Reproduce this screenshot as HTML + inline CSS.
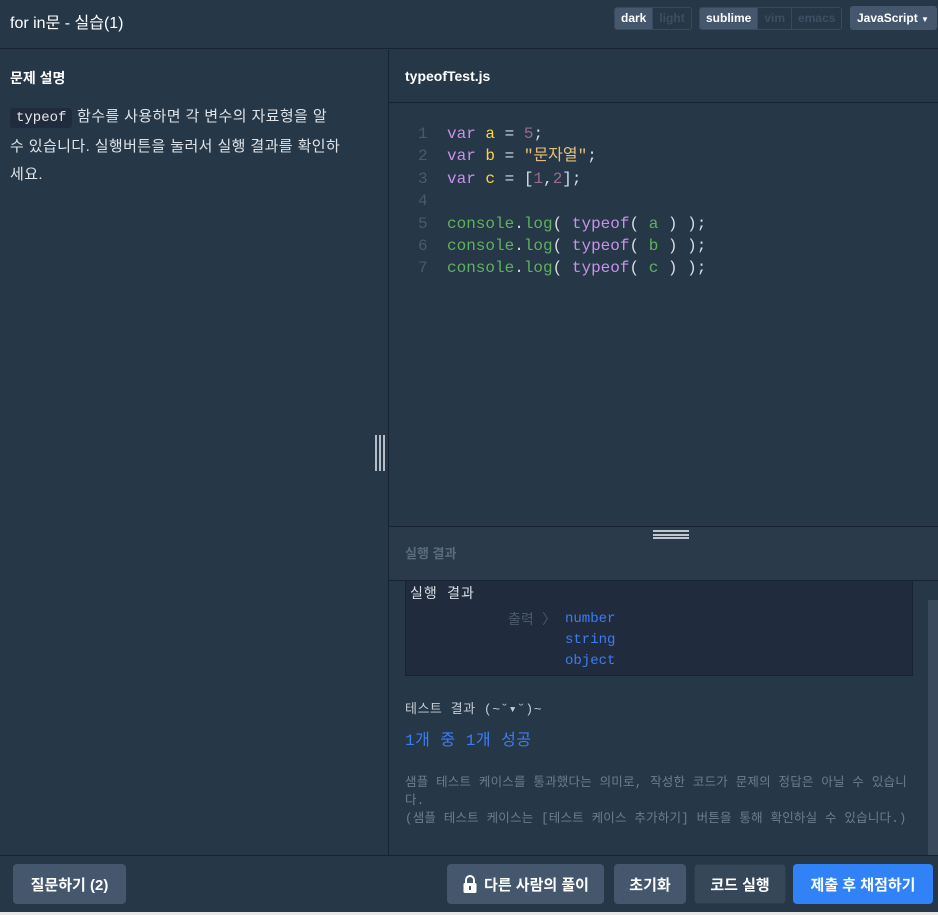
<!DOCTYPE html>
<html><head><meta charset="utf-8"><style>
*{box-sizing:border-box;margin:0;padding:0}
body{width:938px;height:915px;background:#263747;font-family:"Liberation Sans","Noto Sans CJK KR",sans-serif;color:#fff;position:relative;overflow:hidden}
.abs{position:absolute}
.mono{font-family:"Liberation Mono","Noto Sans CJK KR",monospace}
.top{left:0;top:0;width:938px;height:49px;border-bottom:1px solid #172334;background:#263747}
.grp{top:7px;height:23px;border:1px solid #3a4a5c;border-radius:3px;display:flex;font-size:12px;font-weight:bold;overflow:hidden}
.grp span{padding:0 6px;line-height:21px;color:#3d4f63;background:#263747;border-left:1px solid #3a4a5c}
.grp span.on{background:#44576c;color:#fff;border-left:none}
.btn{top:864px;height:40px;border-radius:4px;font-size:15px;font-weight:bold;display:flex;align-items:center;justify-content:center;background:#44576c;color:#fff}
.code div{height:22.4px;line-height:22.4px;white-space:pre;overflow:visible}
.ln{color:#4a5a6b;display:inline-block;width:29px;text-align:left}
.k{color:#c792ea}.v{color:#ffd43b}.n{color:#9b6b8f}.s{color:#e5c07b}.g{color:#5fb15f}.w{color:#d7dde4}
</style></head><body>
<div class="abs top"></div>
<div class="abs" style="left:10px;top:9px;font-size:16px">for in문 - 실습(1)</div>
<div class="abs grp" style="left:614px"><span class="on">dark</span><span>light</span></div>
<div class="abs grp" style="left:699px"><span class="on">sublime</span><span>vim</span><span>emacs</span></div>
<div class="abs" style="left:850px;top:6px;width:87px;height:24px;background:#44576c;border-radius:3px;font-size:12px;font-weight:bold;line-height:24px;padding-left:7px">JavaScript <span style="font-size:8px">▼</span></div>

<div class="abs" style="left:388px;top:50px;width:1px;height:805px;background:#172334"></div>
<div class="abs" style="left:10px;top:68px;font-size:14px;font-weight:bold">문제 설명</div>
<div class="abs" style="left:10px;top:103px;width:375px;font-size:15px;line-height:28.5px;color:#dfe4ea;letter-spacing:0.4px;white-space:nowrap"><span class="mono" style="background:#202b3d;border-radius:3px;padding:2px 6px;font-size:14px;color:#e6e6e6;letter-spacing:0">typeof</span> 함수를 사용하면 각 변수의 자료형을 알<br>수 있습니다. 실행버튼을 눌러서 실행 결과를 확인하<br>세요.</div>
<div class="abs" style="left:375px;top:435px;width:10px;height:36px;border-left:2px solid #b4bcc6;border-right:2px solid #b4bcc6"><div style="margin:0 auto;width:2px;height:36px;background:#b4bcc6"></div></div>

<div class="abs" style="left:389px;top:50px;width:549px;height:53px;border-bottom:1px solid #172334"></div>
<div class="abs" style="left:405px;top:68px;font-size:14px;font-weight:bold">typeofTest.js</div>
<div class="abs code mono" style="left:418px;top:123px;font-size:16px">
<div><span class="ln">1</span><span class="k">var</span> <span class="v">a</span> <span class="w">=</span> <span class="n">5</span><span class="w">;</span></div>
<div><span class="ln">2</span><span class="k">var</span> <span class="v">b</span> <span class="w">=</span> <span class="s">"문자열"</span><span class="w">;</span></div>
<div><span class="ln">3</span><span class="k">var</span> <span class="v">c</span> <span class="w">=</span> <span class="w">[</span><span class="n">1</span><span class="w">,</span><span class="n">2</span><span class="w">];</span></div>
<div><span class="ln">4</span></div>
<div><span class="ln">5</span><span class="g">console</span><span class="w">.</span><span class="g">log</span><span class="w">(</span> <span class="k">typeof</span><span class="w">(</span> <span class="g">a</span> <span class="w">)</span> <span class="w">);</span></div>
<div><span class="ln">6</span><span class="g">console</span><span class="w">.</span><span class="g">log</span><span class="w">(</span> <span class="k">typeof</span><span class="w">(</span> <span class="g">b</span> <span class="w">)</span> <span class="w">);</span></div>
<div><span class="ln">7</span><span class="g">console</span><span class="w">.</span><span class="g">log</span><span class="w">(</span> <span class="k">typeof</span><span class="w">(</span> <span class="g">c</span> <span class="w">)</span> <span class="w">);</span></div>
</div>

<div class="abs" style="left:389px;top:526px;width:549px;height:55px;background:#2b3a4b;border-top:1px solid #172334;border-bottom:1px solid #172334"></div>
<div class="abs" style="left:653px;top:530px;width:36px;height:9px;border-top:2px solid #c0c6cd;border-bottom:2px solid #c0c6cd"><div style="margin-top:1.5px;height:2px;background:#c0c6cd"></div></div>
<div class="abs" style="left:405px;top:543px;font-size:13px;font-weight:bold;color:#5a6b7d">실행 결과</div>
<div class="abs" style="left:928px;top:600px;width:10px;height:255px;background:#3a4a5c"></div>
<div class="abs mono" style="left:405px;top:581px;width:508px;height:95px;background:#202b3d;border:1px solid #172334;border-top:none;font-size:14px">
<div style="position:absolute;left:4px;top:2px;color:#d7dde4;letter-spacing:1px">실행 결과</div>
<div style="position:absolute;left:102px;top:28px;color:#4a5a6b">출력 〉</div>
<div style="position:absolute;left:159px;top:28px;color:#3d7cf5;line-height:21px">number<br>string<br>object</div>
</div>
<div class="abs mono" style="left:405px;top:698px;font-size:13px;color:#c5ccd4;letter-spacing:0.5px">테스트 결과 (~˘▾˘)~</div>
<div class="abs mono" style="left:405px;top:726px;font-size:16px;color:#3d7cf5;letter-spacing:0.5px">1개 중 1개 성공</div>
<div class="abs mono" style="left:405px;top:774px;width:512px;font-size:12.5px;line-height:18px;color:#6c7d8f;letter-spacing:0.2px">샘플 테스트 케이스를 통과했다는 의미로, 작성한 코드가 문제의 정답은 아닐 수 있습니다.<br>(샘플 테스트 케이스는 [테스트 케이스 추가하기] 버튼을 통해 확인하실 수 있습니다.)</div>

<div class="abs" style="left:0;top:855px;width:938px;height:60px;background:#263747;border-top:1px solid #172334"></div>
<div class="abs btn" style="left:13px;width:113px">질문하기 (2)</div>
<div class="abs btn" style="left:447px;width:157px"><svg width="16" height="20" viewBox="0 0 16 20" style="margin-right:6px"><path d="M4 9V6a4 4 0 0 1 8 0v3" fill="none" stroke="#fff" stroke-width="2"/><rect x="1.5" y="9" width="13" height="10" rx="1.5" fill="#fff"/><rect x="7" y="12" width="2" height="4" fill="#44576c"/></svg>다른 사람의 풀이</div>
<div class="abs btn" style="left:614px;width:72px">초기화</div>
<div class="abs btn" style="left:694px;width:92px;background:#364759;border:1px solid #2e3d4e">코드 실행</div>
<div class="abs btn" style="left:793px;width:140px;background:#3182f6">제출 후 채점하기</div>
<div class="abs" style="left:0;top:912px;width:938px;height:3px;background:#e8e8e8"></div>
</body></html>
